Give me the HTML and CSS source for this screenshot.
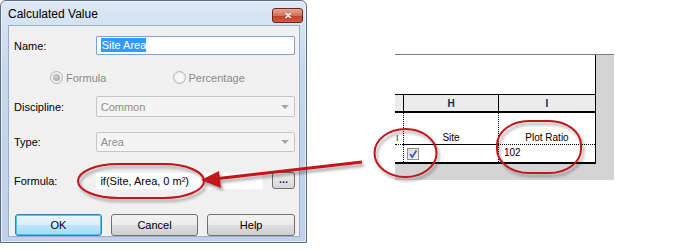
FILE: index.html
```html
<!DOCTYPE html>
<html lang="en">
<head>
  <meta charset="UTF-8" />
  <title>Calculated Value</title>
  <link rel="stylesheet" href="styles.css">
</head>
<body>

  <div class="stage">

    <div class="dialog">
      <div class="titlebar">
        <span class="title">Calculated Value</span>
        <span class="close">&#x2715;</span>
      </div>

      <div class="content">
        <div class="row row-name">
          <label class="label">Name:</label>
          <div class="field input focused"><span class="selected">Site Area</span></div>
        </div>

        <div class="row row-radio">
          <span class="radio-item"><span class="radio checked"></span>Formula</span>
          <span class="radio-item"><span class="radio"></span>Percentage</span>
        </div>

        <div class="row row-discipline">
          <label class="label">Discipline:</label>
          <div class="field select">Common<span class="caret"></span></div>
        </div>

        <div class="row row-type">
          <label class="label">Type:</label>
          <div class="field select">Area<span class="caret"></span></div>
        </div>

        <div class="row row-formula">
          <label class="label">Formula:</label>
          <div class="formula-input">if(Site, Area, 0 m²)</div>
          <div class="dots">...</div>
        </div>

        <div class="row row-buttons">
          <button class="btn default">OK</button>
          <button class="btn">Cancel</button>
          <button class="btn">Help</button>
        </div>
      </div>
    </div>

    <div class="sheet">
      <div class="grid">
        <div class="grid-top"></div>
        <div class="grid-head">
          <div class="cell c-left"></div>
          <div class="cell c-h">H</div>
          <div class="cell c-i">I</div>
        </div>
        <div class="grid-row r1">
          <div class="cell c-left"><span class="stub">I</span></div>
          <div class="cell c-h">Site</div>
          <div class="cell c-i">Plot Ratio</div>
        </div>
        <div class="grid-row r2">
          <div class="cell c-left"></div>
          <div class="cell c-h active">
            <span class="checkbox">
              <svg width="10" height="10" viewBox="0 0 10 10"><path d="M2 5 L4.2 8 L8.5 1.5" fill="none" stroke="#2f56c4" stroke-width="1.6"/></svg>
            </span>
          </div>
          <div class="cell c-i">102</div>
        </div>
      </div>
    </div>

    <!-- callout marks drawn over the screenshot -->
    <svg class="marks" width="696" height="251" viewBox="0 0 696 251">
      <defs>
        <filter id="shade" x="-20%" y="-20%" width="140%" height="160%">
          <feDropShadow dx="2" dy="3" stdDeviation="1.6" flood-color="#000" flood-opacity="0.35"/>
        </filter>
      </defs>
      <g fill="none" stroke="#c0141c" stroke-width="2" filter="url(#shade)">
        <rect x="78" y="164" width="126" height="34" rx="40" ry="17"/>
        <ellipse cx="405.5" cy="153" rx="31" ry="24"/>
        <rect x="497" y="121" width="84" height="52" rx="32" ry="24"/>
      </g>
      <g filter="url(#shade)">
        <line x1="362" y1="162" x2="214" y2="179" stroke="#c0141c" stroke-width="3"/>
        <polygon points="201,180 219,171 221,188" fill="#c0141c"/>
      </g>
    </svg>

  </div>

</body>
</html>
```

FILE: styles.css
```css
body {
  margin: 0;
  background: #ffffff;
  font-family: 'Liberation Sans', Arial, sans-serif;
}
.stage {
  position: relative;
  width: 696px;
  height: 251px;
  display: flex;
  align-items: flex-start;
}

/* dialog window */
.dialog {
  width: 307px;
  height: 243px;
  border: 1px solid #5d6c80;
  border-radius: 6px 6px 0 0;
  background: linear-gradient(#dce8f5, #c5d7ec 30%, #bfd2e9);
  box-shadow: inset 0 0 0 1px rgba(255,255,255,0.55);
  padding: 0 6px 5px 7px;
  box-sizing: border-box;
  display: flex;
  flex-direction: column;
  flex-shrink: 0;
}
.titlebar {
  height: 24px;
  display: flex;
  align-items: flex-start;
  justify-content: space-between;
}
.title {
  font-size: 12px;
  color: #000;
  margin-top: 6px;
}
.close {
  width: 29px;
  height: 13px;
  margin-top: 7px;
  margin-right: -3px;
  border: 1px solid #6a2a1f;
  border-radius: 3px;
  background: linear-gradient(#e6a594, #d4705a 50%, #c0432c 55%, #cf5a40);
  color: #fff;
  font-size: 10px;
  font-weight: bold;
  line-height: 13px;
  text-align: center;
  text-shadow: 0 0 1px #5a1a10;
}
.content {
  flex: 1;
  background: #f0f0f0;
  border: 1px solid #99aec8;
  padding: 10px 4px 0 5px;
}

.row {
  display: flex;
  align-items: center;
}
.label {
  width: 82px;
  font-size: 11px;
  color: #000;
}
.field {
  width: 200px;
  box-sizing: border-box;
  font-size: 11px;
}
.row-name { height: 19px; }
.row-radio { height: 13px; margin-top: 16px; padding-left: 36px; }
.row-discipline { height: 21px; margin-top: 12px; }
.row-type { height: 20px; margin-top: 15px; }
.row-formula { height: 18px; margin-top: 20px; }
.row-buttons { height: 22px; margin-top: 24px; padding-left: 1px; gap: 9px; }

.input {
  height: 19px;
  background: #fff;
  border: 1px solid #7ea3cf;
  border-radius: 1px;
  padding: 1px 0 0 4px;
}
.selected {
  background: #3399ff;
  color: #fff;
  padding: 1px 0 1px 1px;
  line-height: 15px;
}

.radio-item {
  width: 129px;
  display: flex;
  align-items: center;
  gap: 3px;
  font-size: 11px;
  color: #8a8a8a;
}
.radio {
  width: 11px;
  height: 11px;
  border: 1px solid #b5b5b5;
  border-radius: 50%;
  background: radial-gradient(circle, #f6f6f6 40%, #dedede);
  position: relative;
}
.radio.checked::after {
  content: '';
  position: absolute;
  left: 2px;
  top: 2px;
  width: 7px;
  height: 7px;
  border-radius: 50%;
  background: radial-gradient(circle at 40% 40%, #d0d0d0, #9a9a9a);
}

.select {
  height: 100%;
  border: 1px solid #c6c6c6;
  border-radius: 2px;
  background: #f4f4f4;
  color: #8d8d8d;
  padding-left: 4px;
  display: flex;
  align-items: center;
  justify-content: space-between;
}
.caret {
  width: 0;
  height: 0;
  margin-right: 5px;
  border-left: 4px solid transparent;
  border-right: 4px solid transparent;
  border-top: 4px solid #a5a5a5;
}

.formula-input {
  width: 169px;
  height: 18px;
  box-sizing: border-box;
  background: #fff;
  border: 1px solid #f3f3f3;
  font-size: 11px;
  color: #000;
  padding: 2px 0 0 4px;
}
.dots {
  width: 23px;
  height: 17px;
  box-sizing: border-box;
  margin-left: 9px;
  border: 1px solid #707070;
  border-radius: 3px;
  background: linear-gradient(#f4f4f4, #e4e4e4 50%, #d6d6d6);
  font-size: 11px;
  font-weight: bold;
  color: #1c2a6a;
  text-align: center;
  line-height: 12px;
  align-self: flex-start;
}

.btn {
  width: 88px;
  height: 22px;
  border: 1px solid #707070;
  border-radius: 3px;
  background: linear-gradient(#f2f2f2, #ebebeb 50%, #dddddd 51%, #cfcfcf);
  font-family: 'Liberation Sans', Arial, sans-serif;
  font-size: 11px;
  color: #000;
  padding: 0;
}
.btn.default {
  width: 87px;
  border-color: #3c7fb1;
  background: linear-gradient(#eaf6fd, #d9f0fc 50%, #bee6fd 51%, #a7d9f5);
  box-shadow: inset 0 0 0 1px #48c6f3;
}

/* spreadsheet clip */
.sheet {
  margin-left: 88px;
  margin-top: 54px;
  width: 219px;
  height: 126px;
  background: #d4d4d4;
  border-top: 1px solid #7d7d7d;
  box-sizing: border-box;
}
.grid {
  width: 201px;
  background: #fff;
  border-right: 1px solid #000;
  box-sizing: border-box;
  font-size: 10px;
  color: #000;
}
.grid-top {
  height: 39px;
  border-bottom: 1px solid #000;
}
.grid-head {
  height: 16px;
  display: flex;
  background: #ececec;
  border-bottom: 2px solid #000;
}
.grid-head .cell {
  font-weight: bold;
  color: #18265c;
  display: flex;
  align-items: center;
  justify-content: center;
}
.grid-row {
  display: flex;
}
.cell {
  box-sizing: border-box;
}
.c-left { width: 8px; overflow: hidden; }
.c-h { width: 95px; border-left: 1px solid #000; }
.c-i { width: 97px; border-left: 1px solid #000; }
.grid-head .c-left { border: 0; }

.r1 {
  height: 31px;
  border-bottom: 1px dotted #000;
}
.r1 .cell {
  display: flex;
  align-items: flex-end;
  justify-content: center;
  padding-bottom: 1px;
}
.r1 .c-h, .r1 .c-i,
.r2 .c-h, .r2 .c-i { border-left-style: dotted; }
.r1 .c-left { justify-content: flex-start; padding-left: 1px; }
.stub { color: #1a2a70; font-size: 9px; }

.r2 {
  height: 17px;
  border-bottom: 2px solid #000;
}
.r2 .c-h.active {
  border-top: 1px solid #000;
  margin-top: -1px;
  padding: 3px 0 0 3px;
}
.r2 .c-i {
  padding: 1px 0 0 5px;
  line-height: 14px;
}
.checkbox {
  display: flex;
  align-items: center;
  justify-content: center;
  width: 10px;
  height: 10px;
  border: 1px solid #8e8f8f;
  background: linear-gradient(135deg, #dcdcdc, #f6f6f6);
}

.marks {
  position: absolute;
  left: 0;
  top: 0;
  pointer-events: none;
}
```
